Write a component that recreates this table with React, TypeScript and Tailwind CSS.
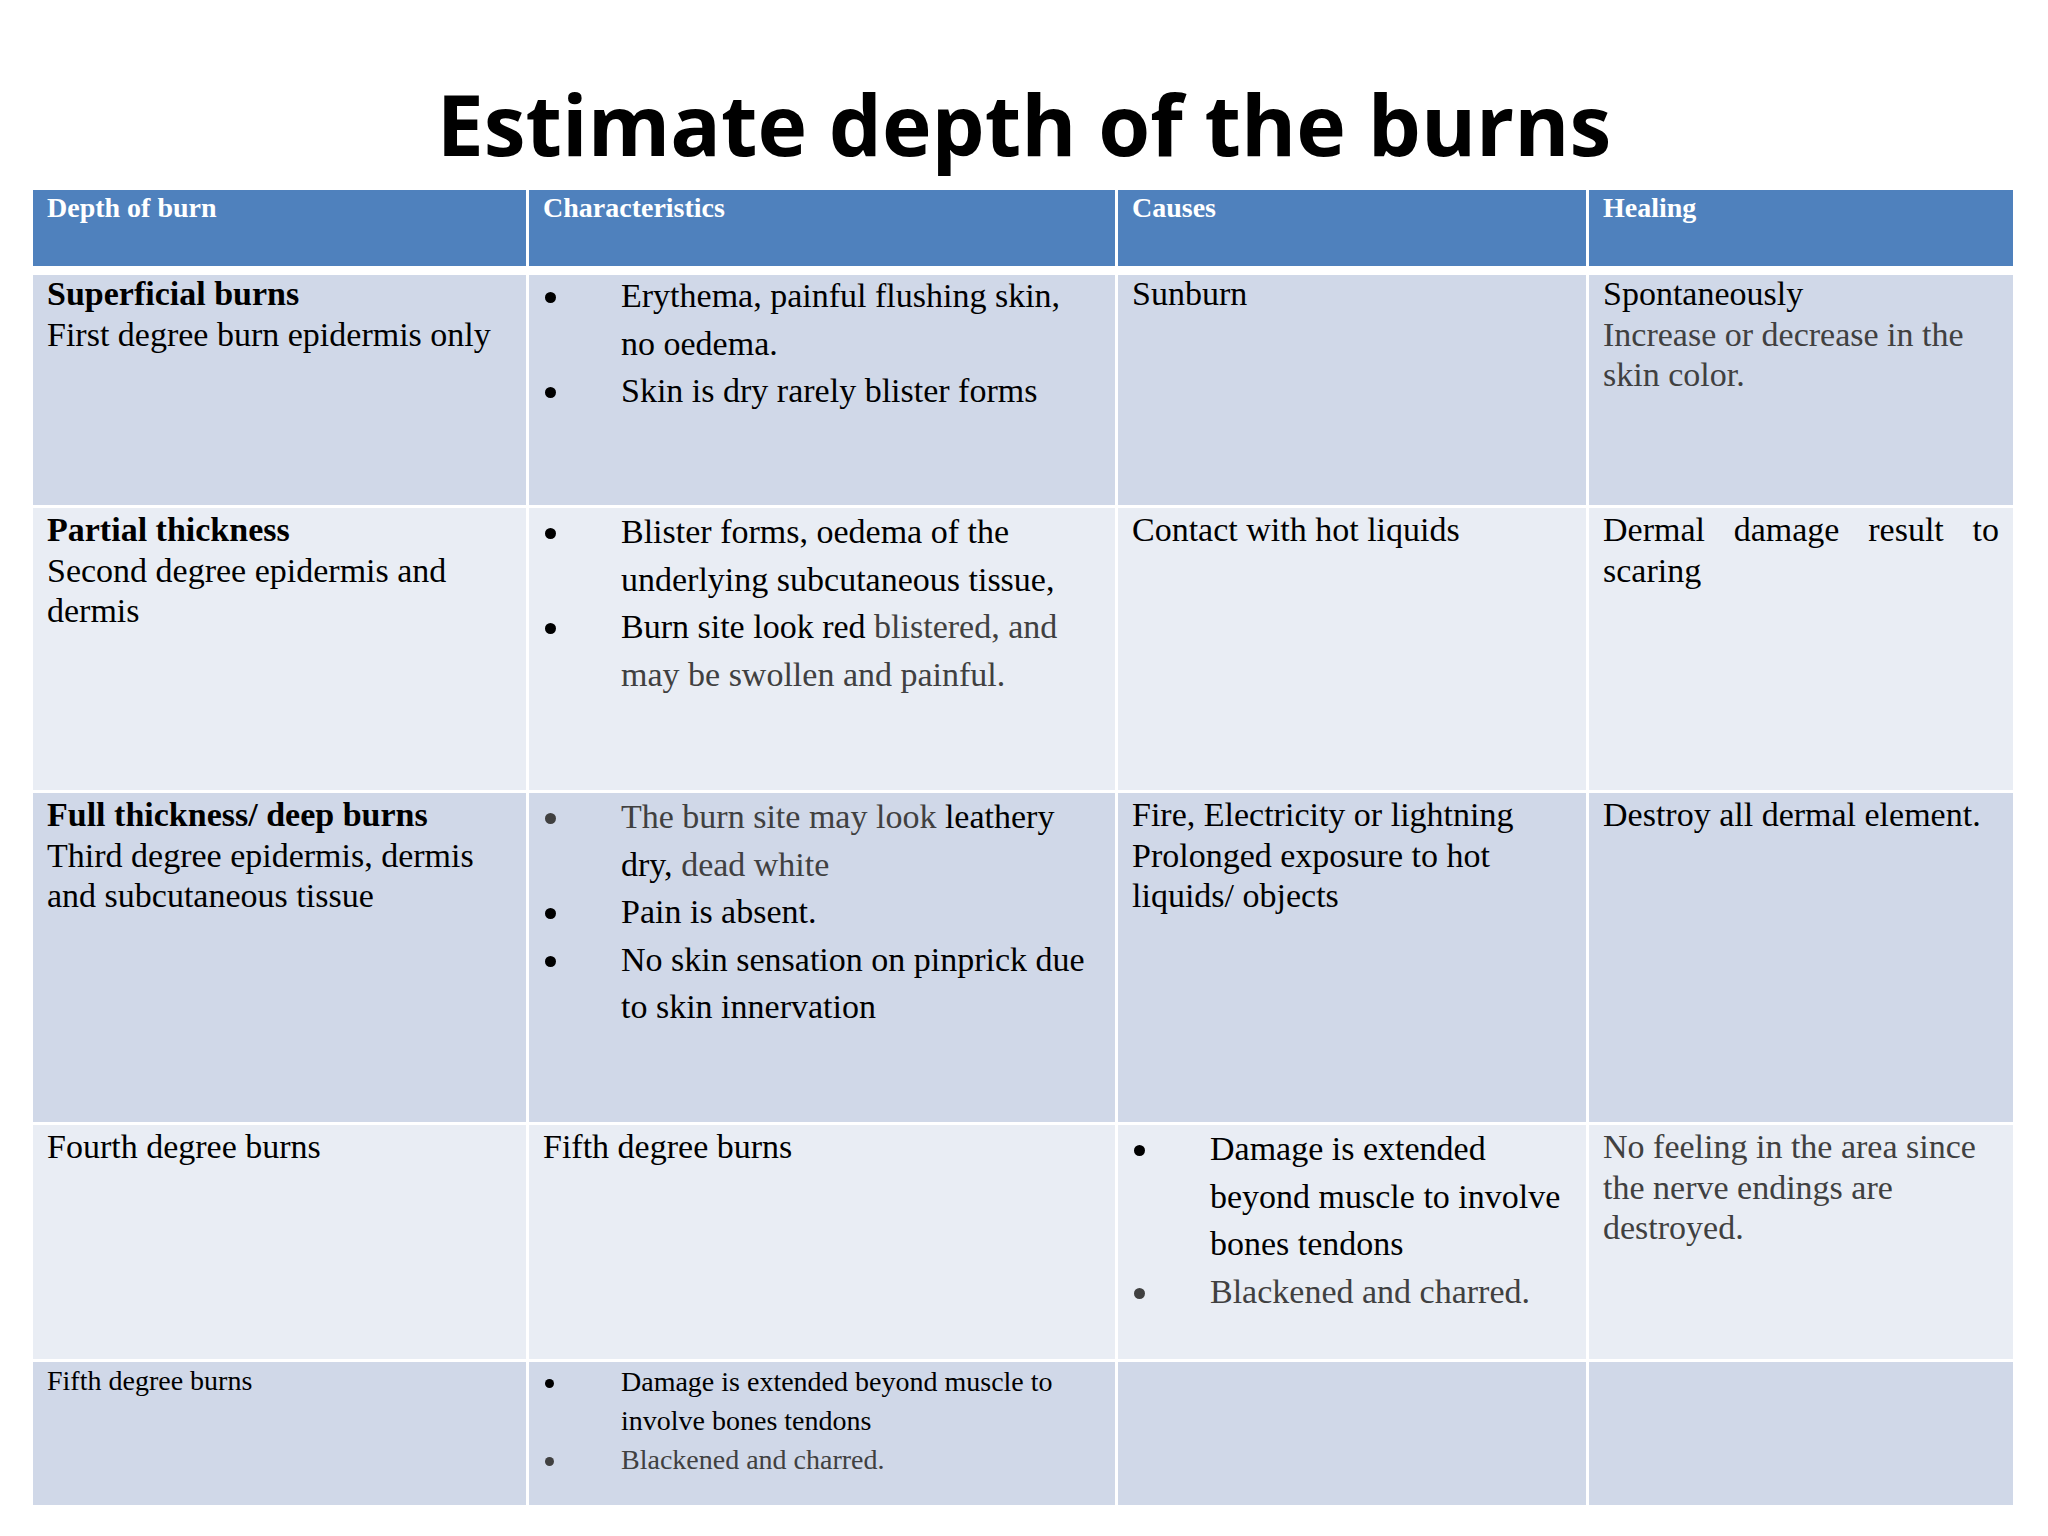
import type { ReactNode } from "react";

const GRID = "grid grid-cols-[493px_586px_468px_424px] gap-x-[3px]";
const SERIF = "font-['Liberation_Serif','Times_New_Roman',serif]";

const BAND = ["bg-[#d0d8e8]", "bg-[#e9edf4]"];

function Gray({ children }: { children: ReactNode }) {
  return <span className="text-[#404040]">{children}</span>;
}

// One bulleted paragraph; the round bullet hangs in its own column like PowerPoint's.
function Item({
  children,
  gray = false,
  small = false,
}: {
  children: ReactNode;
  gray?: boolean;
  small?: boolean;
}) {
  return (
    <div className="flex">
      <span className="relative w-[78px] shrink-0">
        <span
          className={`absolute rounded-full ${gray ? "bg-[#404040]" : "bg-black"} ${
            small ? "top-[17px] left-[2px] size-[9px]" : "top-[20px] left-[2px] size-[11px]"
          }`}
        />
      </span>
      <span>{children}</span>
    </div>
  );
}

function Bullets({ children, small = false }: { children: ReactNode; small?: boolean }) {
  return (
    <div className={`px-[14px] leading-[1.4] ${small ? "text-[28px]" : "text-[34px]"}`}>
      {children}
    </div>
  );
}

function Text({ children, small = false }: { children: ReactNode; small?: boolean }) {
  return (
    <div
      className={`px-[14px] pt-[2px] ${
        small ? "text-[28px] leading-[33.6px]" : "text-[34px] leading-[40.5px]"
      }`}
    >
      {children}
    </div>
  );
}

type Row = { height: string; nudge?: string; cells: ReactNode[] };

const ROWS: Row[] = [
  {
    height: "h-[230px]",
    nudge: "-mt-[3px]",
    cells: [
      <Text key="a">
        <b>Superficial burns</b>
        <br />
        First degree burn epidermis only
      </Text>,
      <Bullets key="b">
        <Item>
          Erythema, painful flushing skin,
          <br />
          no oedema.
        </Item>
        <Item>Skin is dry rarely blister forms</Item>
      </Bullets>,
      <Text key="c">Sunburn</Text>,
      <Text key="d">
        Spontaneously
        <br />
        <Gray>
          Increase or decrease in the
          <br />
          skin color.
        </Gray>
      </Text>,
    ],
  },
  {
    height: "h-[282px]",
    cells: [
      <Text key="a">
        <b>Partial thickness</b>
        <br />
        Second degree epidermis and
        <br />
        dermis
      </Text>,
      <Bullets key="b">
        <Item>
          Blister forms, oedema of the
          <br />
          underlying subcutaneous tissue,
        </Item>
        <Item>
          Burn site look red{" "}
          <Gray>
            blistered, and
            <br />
            may be swollen and painful.
          </Gray>
        </Item>
      </Bullets>,
      <Text key="c">Contact with hot liquids</Text>,
      <Text key="d">
        <div className="text-justify [text-align-last:justify]">Dermal damage result to</div>
        <div>scaring</div>
      </Text>,
    ],
  },
  {
    height: "h-[329px]",
    cells: [
      <Text key="a">
        <b>Full thickness/ deep burns</b>
        <br />
        Third degree epidermis, dermis
        <br />
        and subcutaneous tissue
      </Text>,
      <Bullets key="b">
        <Item gray>
          <Gray>The burn site may look</Gray> leathery
          <br />
          dry, <Gray>dead white</Gray>
        </Item>
        <Item>Pain is absent.</Item>
        <Item>
          No skin sensation on pinprick due
          <br />
          to skin innervation
        </Item>
      </Bullets>,
      <Text key="c">
        Fire, Electricity or lightning
        <br />
        Prolonged exposure to hot
        <br />
        liquids/ objects
      </Text>,
      <Text key="d">Destroy all dermal element.</Text>,
    ],
  },
  {
    height: "h-[234px]",
    cells: [
      <Text key="a">Fourth degree burns</Text>,
      <Text key="b">Fifth degree burns</Text>,
      <Bullets key="c">
        <Item>
          Damage is extended
          <br />
          beyond muscle to involve
          <br />
          bones tendons
        </Item>
        <Item gray>
          <Gray>Blackened and charred.</Gray>
        </Item>
      </Bullets>,
      <Text key="d">
        <Gray>
          No feeling in the area since
          <br />
          the nerve endings are
          <br />
          destroyed.
        </Gray>
      </Text>,
    ],
  },
  {
    height: "h-[143px]",
    cells: [
      <Text key="a" small>
        Fifth degree burns
      </Text>,
      <Bullets key="b" small>
        <Item small>
          Damage is extended beyond muscle to
          <br />
          involve bones tendons
        </Item>
        <Item small gray>
          <Gray>Blackened and charred.</Gray>
        </Item>
      </Bullets>,
      <div key="c" />,
      <div key="d" />,
    ],
  },
];

const HEADERS = ["Depth of burn", "Characteristics", "Causes", "Healing"];

export default function App() {
  return (
    <div className="h-[1536px] w-[2048px] overflow-hidden bg-white">
      <h1 className="pt-[82px] text-center font-['Open_Sans',sans-serif] text-[84px] font-bold leading-[84px] text-black">
        Estimate depth of the burns
      </h1>

      <div className={`mt-[24px] ml-[33px] w-[1980px] ${SERIF} text-black`}>
        {/* Header row, thick white rule underneath */}
        <div className={`${GRID} mb-[9px] h-[76px]`}>
          {HEADERS.map((h) => (
            <div
              key={h}
              className="bg-[#4f81bd] px-[14px] pt-[2px] text-[28px] font-bold leading-[32px] text-white"
            >
              {h}
            </div>
          ))}
        </div>

        <div className="flex flex-col gap-y-[3px]">
          {ROWS.map((row, i) => (
            <div key={i} className={`${GRID} ${row.height}`}>
              {row.cells.map((cell, j) => (
                <div key={j} className={BAND[i % 2]}>
                  <div className={row.nudge}>{cell}</div>
                </div>
              ))}
            </div>
          ))}
        </div>
      </div>
    </div>
  );
}
